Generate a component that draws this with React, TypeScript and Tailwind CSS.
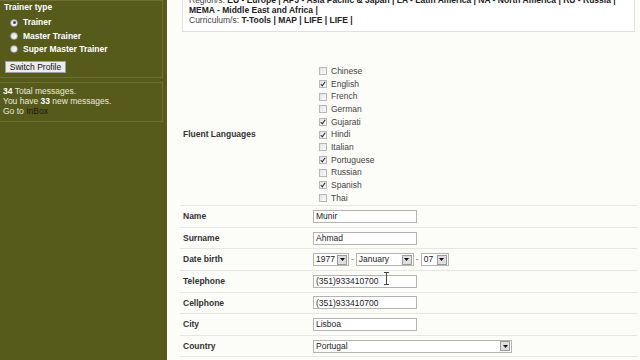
import React from "react";

const languages: [string, boolean][] = [
  ["Chinese", false],
  ["English", true],
  ["French", false],
  ["German", false],
  ["Gujarati", true],
  ["Hindi", true],
  ["Italian", false],
  ["Portuguese", true],
  ["Russian", false],
  ["Spanish", true],
  ["Thai", false],
];

function Radio({ checked }: { checked?: boolean }) {
  return (
    <span className="w-[8px] h-[8px] rounded-full border border-[#9a9a9a] bg-gradient-to-br from-[#dcdcdc] to-[#ffffff] flex items-center justify-center">
      {checked && <span className="w-[3px] h-[3px] rounded-full bg-[#2b4a8a]" />}
    </span>
  );
}

function Check({ checked }: { checked: boolean }) {
  return (
    <span className="w-[8px] h-[8px] border border-[#b8b8b8] bg-gradient-to-br from-[#e4e4e4] to-[#fafafa] flex items-center justify-center">
      {checked && (
        <svg width="6" height="6" viewBox="0 0 6 6">
          <path d="M0.8 3.2 L2.3 4.8 L5.2 0.8" stroke="#333" strokeWidth="1.1" fill="none" />
        </svg>
      )}
    </span>
  );
}

function DropBtn() {
  return (
    <span className="w-[10px] h-[10px] border border-[#9c9c9c] bg-[#dedede] flex items-center justify-center">
      <svg width="5" height="3" viewBox="0 0 5 3">
        <path d="M0 0 H5 L2.5 3 Z" fill="#111" />
      </svg>
    </span>
  );
}

function Select({ value, width }: { value: string; width: string }) {
  return (
    <span className={`${width} h-[13px] border border-[#b4b4b4] bg-white flex items-center justify-between pl-[2px] pr-[1px]`}>
      <span>{value}</span>
      <DropBtn />
    </span>
  );
}

function Input({ value }: { value?: string }) {
  return (
    <span className="w-[104px] h-[13px] border border-[#b4b4b4] bg-white flex items-center pl-[2px]">
      {value}
    </span>
  );
}

function Row({ label, children }: { label: string; children?: React.ReactNode }) {
  return (
    <div className="flex items-center h-[21.6px] border-b border-[#e6e6e2]">
      <div className="w-[133px] pl-[3px] font-bold text-[#333]">{label}</div>
      <div className="flex items-center text-[#222]">{children}</div>
    </div>
  );
}

export default function App() {
  return (
    <div className="relative flex w-[640px] h-[360px] overflow-hidden bg-[#fcfcf8] font-['Liberation_Sans',Arial,sans-serif] text-[8.5px]">
      <aside className="w-[167px] shrink-0 bg-[#565b1c] pr-[4px] text-[#e8e8dc]">
        <div className="border border-[#6c7133] border-l-0 h-[78px] pl-[4px] pt-[1px]">
          <div className="font-bold text-white leading-[10px]">Trainer type</div>
          <div className="flex flex-col pl-[6px] pt-[4px]">
            {["Trainer", "Master Trainer", "Super Master Trainer"].map((t, i) => (
              <div key={t} className="flex items-center gap-[5px] h-[13.4px]">
                <Radio checked={i === 0} />
                <span className="font-bold text-white">{t}</span>
              </div>
            ))}
          </div>
          <button className="mt-[5px] ml-[1px] w-[61px] h-[12px] bg-[#ececec] border border-[#a0a0a0] text-[#111] text-[8.5px] leading-[10px]">
            Switch Profile
          </button>
        </div>
        <div className="mt-[4px] border border-[#6c7133] border-l-0 h-[40px] pl-[3px] pt-[3px] leading-[10px]">
          <div>
            <b className="text-white">34</b> Total messages.
          </div>
          <div>
            You have <b className="text-white">33</b> new messages.
          </div>
          <div>
            Go to <span className="text-[#1a1a0a]">InBox</span>
          </div>
        </div>
      </aside>

      <main className="flex-1 pl-[13px] pr-[3px]">
        <div className="-mt-[8px] ml-[2px] mr-[2px] border border-[#e0e0dc] bg-white pl-[6px] pt-[2px] pb-[6px] leading-[10px] text-[#444] whitespace-nowrap overflow-hidden">
          <div>
            Region/s: <b className="text-[#222]">EU - Europe | APJ - Asia Pacific &amp; Japan | LA - Latin America | NA - North America | RU - Russia |</b>
          </div>
          <div>
            <b className="text-[#222]">MEMA - Middle East and Africa |</b>
          </div>
          <div>
            Curriculum/s: <b className="text-[#222]">T-Tools | MAP | LIFE | LIFE |</b>
          </div>
        </div>

        <div className="mt-[33px] flex items-center border-b border-[#e6e6e2] pb-[1px]">
          <div className="w-[139px] pl-[3px] font-bold text-[#333]">Fluent Languages</div>
          <div className="flex flex-col text-[#444]">
            {languages.map(([l, c]) => (
              <div key={l} className="flex items-center gap-[4px] h-[12.67px]">
                <Check checked={c} />
                <span>{l}</span>
              </div>
            ))}
          </div>
        </div>

        <Row label="Name">
          <Input value="Munir" />
        </Row>
        <Row label="Surname">
          <Input value="Ahmad" />
        </Row>
        <Row label="Date birth">
          <Select value="1977" width="w-[36px]" />
          <span className="px-[2px] text-[#666]">-</span>
          <Select value="January" width="w-[58px]" />
          <span className="px-[2px] text-[#666]">-</span>
          <Select value="07" width="w-[28px]" />
        </Row>
        <Row label="Telephone">
          <Input value="(351)933410700" />
        </Row>
        <Row label="Cellphone">
          <Input value="(351)933410700" />
        </Row>
        <Row label="City">
          <Input value="Lisboa" />
        </Row>
        <Row label="Country">
          <Select value="Portugal" width="w-[199px]" />
        </Row>
        <Row label="">
          <span className="mt-[6px]">
            <Input />
          </span>
        </Row>
      </main>

      <svg className="absolute left-[383px] top-[272px]" width="7" height="13" viewBox="0 0 7 13">
        <path d="M1 0.5 H6 M3.5 0.5 V12.5 M1 12.5 H6" stroke="#444" strokeWidth="1" fill="none" />
      </svg>
    </div>
  );
}
